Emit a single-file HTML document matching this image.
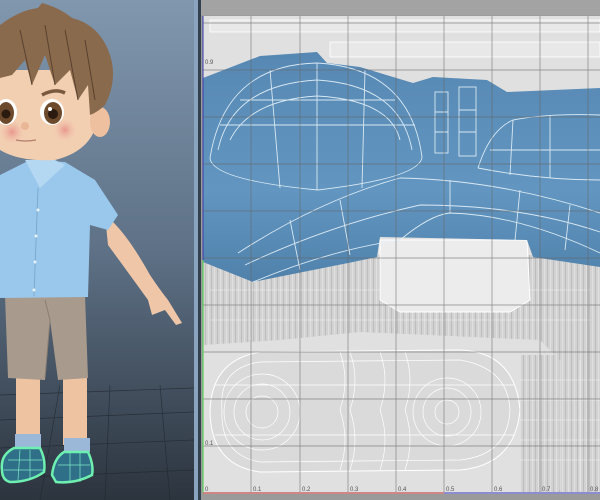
<!DOCTYPE html>
<html><head><style>
html,body{margin:0;padding:0;width:600px;height:500px;overflow:hidden;background:#3a4552}
svg{display:block}
</style></head><body>
<svg width="600" height="500" viewBox="0 0 600 500" xmlns="http://www.w3.org/2000/svg" font-family="Liberation Sans, sans-serif">
<defs>
<linearGradient id="bg" x1="0" y1="0" x2="0" y2="1">
<stop offset="0" stop-color="#8097ae"/><stop offset="0.5" stop-color="#5e7186"/><stop offset="1" stop-color="#2c343e"/>
</linearGradient>
<linearGradient id="blue" x1="0" y1="0" x2="0" y2="1">
<stop offset="0" stop-color="#5688b3"/><stop offset="0.6" stop-color="#6296c0"/><stop offset="1" stop-color="#4f81ab"/>
</linearGradient>
<pattern id="streak" width="6" height="10" patternUnits="userSpaceOnUse">
<rect width="6" height="10" fill="#d2d2d2"/><rect x="1" width="1" height="10" fill="#bdbdbd"/><rect x="4" width="1" height="10" fill="#e0e0e0"/>
</pattern>
<radialGradient id="cheek" cx="0.5" cy="0.5" r="0.5"><stop offset="0" stop-color="#e8958c"/><stop offset="1" stop-color="#f0c6ad" stop-opacity="0"/></radialGradient>
</defs>
<rect x="0" y="0" width="194" height="500" fill="url(#bg)"/>
<g stroke="#1f252c" stroke-width="0.7" opacity="0.7">
<line x1="0" y1="395" x2="194" y2="388"/><line x1="0" y1="420" x2="194" y2="412"/><line x1="0" y1="448" x2="194" y2="440"/><line x1="0" y1="478" x2="194" y2="470"/>
<line x1="60" y1="385" x2="40" y2="500"/><line x1="110" y1="385" x2="105" y2="500"/><line x1="160" y1="385" x2="170" y2="500"/>
</g>
<path d="M105 215 Q125 230 150 275 Q160 290 168 300 L182 323 L176 325 L165 310 L152 315 L148 300 Q130 275 108 245 Z" fill="#efc7a8"/>
<rect x="16" y="375" width="24" height="68" fill="#eec3a2"/>
<rect x="63" y="375" width="24" height="70" fill="#eec3a2"/>
<rect x="15" y="434" width="26" height="14" fill="#9cb8d8"/>
<rect x="64" y="438" width="26" height="14" fill="#9cb8d8"/>
<path d="M2 470 Q0 455 14 448 L40 448 Q46 460 44 472 Q30 482 10 482 Q2 480 2 470Z" fill="#2f6f88" stroke="#6ef0b0" stroke-width="2.5"/>
<path d="M52 475 Q54 458 64 452 L88 452 Q94 465 92 475 Q75 484 56 482Z" fill="#2f6f88" stroke="#6ef0b0" stroke-width="2.5"/>
<g stroke="#7de8c8" stroke-width="0.7"><line x1="8" y1="460" x2="42" y2="460"/><line x1="4" y1="470" x2="44" y2="470"/><line x1="20" y1="450" x2="18" y2="480"/><line x1="30" y1="450" x2="30" y2="480"/><line x1="58" y1="465" x2="90" y2="465"/><line x1="70" y1="453" x2="70" y2="482"/><line x1="80" y1="453" x2="80" y2="482"/></g>
<path d="M5 295 L85 295 L88 378 L58 380 L50 320 L45 380 L8 378 Z" fill="#a89a8c"/>
<path d="M45 300 L50 320 L45 378" stroke="#8c7f72" fill="none"/>
<path d="M0 175 L30 160 L65 162 L95 180 L118 215 L108 230 L90 225 L88 297 L0 298 Z" fill="#9ac8ec"/>
<path d="M25 160 L40 188 L65 165 L55 160 Z" fill="#b4d7f2"/>
<line x1="38" y1="188" x2="34" y2="296" stroke="#7ea9cc"/>
<g fill="#e8f2fa"><circle cx="38" cy="210" r="1.5"/><circle cx="36" cy="236" r="1.5"/><circle cx="35" cy="262" r="1.5"/><circle cx="34" cy="290" r="1.5"/></g>
<path d="M0 70 L90 70 L98 115 Q95 150 55 160 Q20 162 0 150 Z" fill="#f3cfb2"/>
<ellipse cx="100" cy="122" rx="10" ry="15" fill="#eec0a0"/>
<circle cx="12" cy="132" r="13" fill="url(#cheek)"/><circle cx="65" cy="130" r="12" fill="url(#cheek)"/>
<ellipse cx="52" cy="112" rx="12" ry="13" fill="#fff"/><ellipse cx="53" cy="113" rx="9" ry="11" fill="#6e4a2c"/><circle cx="53" cy="114" r="5" fill="#2a1a10"/><circle cx="50" cy="109" r="2" fill="#fff"/>
<ellipse cx="6" cy="112" rx="11" ry="13" fill="#fff"/><ellipse cx="6" cy="113" rx="8" ry="11" fill="#6e4a2c"/><circle cx="6" cy="114" r="4.5" fill="#2a1a10"/>
<path d="M42 95 Q55 88 65 93" stroke="#7a5a3e" stroke-width="3.5" fill="none"/>
<circle cx="25" cy="126" r="4" fill="#e9b697"/>
<path d="M16 140 Q25 142 36 140" stroke="#b07e6a" stroke-width="1.2" fill="none"/>
<path d="M0 25 Q20 10 38 8 L42 3 Q60 8 72 18 Q100 25 110 55 Q118 80 105 105 Q98 112 90 115 L88 85 L78 100 L70 70 L55 85 L45 55 L32 85 L25 60 L12 75 L0 78 Z" fill="#8a6a4c"/>
<g stroke="#5a4230" stroke-width="1" fill="none"><path d="M20 30 L32 85"/><path d="M45 25 L55 85"/><path d="M65 30 L78 100"/><path d="M85 40 L95 100"/></g>
<rect x="194" y="0" width="4" height="500" fill="#8aa4c0"/>
<rect x="198" y="0" width="3" height="500" fill="#33404e"/>
<rect x="201" y="0" width="399" height="500" fill="#9c9c9c"/>
<rect x="201" y="0" width="399" height="15" fill="#a3a3a3"/>
<rect x="203" y="16" width="397" height="478" fill="#e0e0e0"/>
<g stroke="#ffffff" stroke-width="0.8" fill="#e8e8e8"><rect x="210" y="20" width="390" height="12"/><rect x="330" y="42" width="270" height="15"/></g>
<path d="M203 255 L600 255 L600 360 L560 360 L540 340 L360 332 L280 340 L203 345 Z" fill="url(#streak)"/>
<path d="M210 290 L590 290 M210 305 L590 305 M210 320 L590 320 M250 280 L250 340 M300 275 L300 340 M540 270 L540 340" stroke="#f2f2f2" stroke-width="0.6"/>
<path d="M380 240 L527 240 L530 300 L510 312 L400 312 L380 300 Z" fill="#ececec" stroke="#fff"/>
<path d="M203 78 L260 56 L317 52 L327 63 L360 67 L413 83 L433 77 L487 80 L507 92 L600 88 L600 267 L533 257 L527 240 L380 237 L377 257 L353 262 L313 270 L253 282 L203 262 Z" fill="url(#blue)"/>
<g stroke="#e6f2fa" stroke-width="0.9" fill="none" opacity="0.9">
<path d="M210 158 Q225 65 317 63 Q410 68 422 157 Q420 178 318 190 Q212 180 210 158Z"/>
<path d="M218 150 Q232 85 317 80 Q400 85 412 150"/>
<path d="M230 140 Q250 100 317 96 Q390 100 400 140"/>
<path d="M317 63 L317 190 M270 70 L280 188 M365 70 L362 188 M240 100 L395 100 M220 125 L415 125"/>
<path d="M478 168 Q490 130 513 120 Q550 113 600 115 M478 168 Q540 180 600 180 M490 150 L600 150 M513 120 L510 175 M550 115 L550 178"/>
<path d="M238 253 Q320 200 400 178 Q500 180 600 213 M253 282 Q330 250 400 240 Q430 215 450 213 Q520 215 600 253 M245 265 Q330 225 420 205 Q520 205 600 232"/>
<path d="M290 220 L300 270 M340 200 L350 255 M450 180 L450 213 M520 190 L515 240 M570 205 L565 250"/>
<rect x="435" y="92" width="13" height="61"/><rect x="459" y="87" width="17" height="69"/>
<path d="M435 112 H448 M435 132 H448 M459 110 H476 M459 132 H476"/>
</g>
<path d="M210 410 Q212 360 260 352 L460 350 Q515 352 520 410 Q515 465 460 470 L260 472 Q210 465 210 410Z" fill="#dadada" stroke="#fff"/>
<g stroke="#ffffff" stroke-width="0.7" fill="none">
<circle cx="262" cy="412" r="38"/><circle cx="262" cy="412" r="28"/><circle cx="262" cy="412" r="16"/>
<circle cx="447" cy="412" r="34"/><circle cx="447" cy="412" r="24"/><circle cx="447" cy="412" r="12"/>
<path d="M222 410 Q218 368 260 362 L460 360 Q508 368 510 410 Q508 455 460 460 L260 462 Q220 455 222 410"/>
<path d="M340 352 Q350 380 340 410 Q350 440 340 470 M350 352 Q360 380 350 410 Q360 440 350 470 M380 352 Q390 380 380 410 Q390 440 380 470 M405 352 Q415 380 405 410 Q415 440 405 470"/>
<path d="M215 385 L515 385 M215 435 L515 435"/>
</g>
<rect x="520" y="355" width="80" height="137" fill="url(#streak)"/>
<g stroke="#f0f0f0" stroke-width="0.6"><path d="M520 380 L600 380 M520 400 L600 400 M520 420 L600 420 M520 440 L600 440 M520 460 L600 460 M540 360 L540 490 M560 360 L560 490 M580 360 L580 490"/></g>
<g stroke="#666" stroke-width="0.7" opacity="0.75">
<path d="M251 16 V492 M300 16 V492 M348 16 V492 M396 16 V492 M444 16 V492 M492 16 V492 M540 16 V492 M588 16 V492"/>
<path d="M203 446 H600 M203 399 H600 M203 352 H600 M203 305 H600 M203 258 H600 M203 211 H600 M203 164 H600 M203 117 H600 M203 70 H600 M203 23 H600"/>
</g>
<g font-size="6" fill="#555"><text x="205" y="64">0.9</text><text x="205" y="445">0.1</text><text x="205" y="491">0</text><text x="253" y="491">0.1</text><text x="302" y="491">0.2</text><text x="350" y="491">0.3</text><text x="398" y="491">0.4</text><text x="446" y="491">0.5</text><text x="494" y="491">0.6</text><text x="542" y="491">0.7</text><text x="590" y="491">0.8</text></g>
<line x1="203" y1="16" x2="203" y2="493" stroke="#3a3ab0" stroke-width="1"/>
<line x1="203" y1="260" x2="203" y2="493" stroke="#5ad05a" stroke-width="1.2"/>
<line x1="203" y1="493" x2="444" y2="493" stroke="#c85050" stroke-width="1.2"/>
<line x1="444" y1="493" x2="600" y2="493" stroke="#5a5ac8" stroke-width="1.2"/>
<rect x="201" y="494" width="399" height="6" fill="#9a9a9a"/>
</svg>
</body></html>
